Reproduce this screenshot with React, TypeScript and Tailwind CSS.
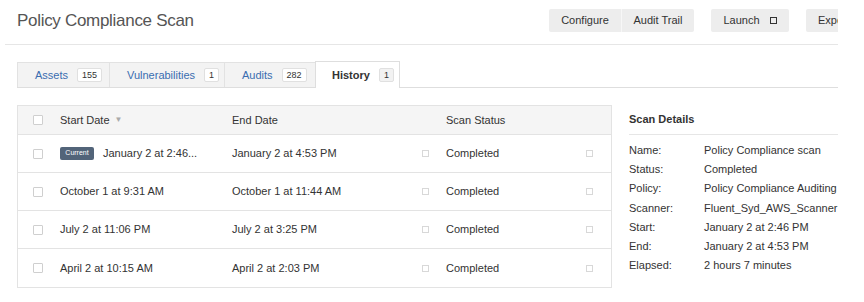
import React from 'react';

const tabs = [
  { label: 'Assets', count: '155', w: 'w-[92px]' },
  { label: 'Vulnerabilities', count: '1', w: 'w-[115px]' },
  { label: 'Audits', count: '282', w: 'w-[91px]' },
];

const rows = [
  { start: 'January 2 at 2:46...', end: 'January 2 at 4:53 PM', current: true },
  { start: 'October 1 at 9:31 AM', end: 'October 1 at 11:44 AM' },
  { start: 'July 2 at 11:06 PM', end: 'July 2 at 3:25 PM' },
  { start: 'April 2 at 10:15 AM', end: 'April 2 at 2:03 PM' },
];

const details = [
  ['Name:', 'Policy Compliance scan'],
  ['Status:', 'Completed'],
  ['Policy:', 'Policy Compliance Auditing'],
  ['Scanner:', 'Fluent_Syd_AWS_Scanner'],
  ['Start:', 'January 2 at 2:46 PM'],
  ['End:', 'January 2 at 4:53 PM'],
  ['Elapsed:', '2 hours 7 minutes'],
];

function Checkbox() {
  return <span className="block h-[10px] w-[10px] rounded-[1px] border border-[#cfcfcf] bg-white" />;
}

function Mini() {
  return <span className="block h-[7px] w-[7px] border border-[#d8d8d8] bg-white" />;
}

const grid = 'grid grid-cols-[42px_172px_190px_24px_140px_25px] items-center';

export default function App() {
  return (
    <div className="h-[302px] w-[864px] bg-white font-['Liberation_Sans',Arial,sans-serif] text-[#333]">
      <div className="w-[838px] overflow-hidden">
        {/* header */}
        <div className="ml-[5px] flex h-[45px] border-b border-[#e6e6e6] pl-[12px]">
          <div className="w-[532px] shrink-0 pt-[9px] text-[17px] leading-[24px] tracking-[-0.3px] text-[#555]">
            Policy Compliance Scan
          </div>
          <div className="flex shrink-0 pt-[9px] text-[11px]">
            <div className="flex h-[23px] rounded-[2px] bg-[#ededed]">
              <span className="flex w-[73px] items-center justify-center border-r border-[#f7f7f7]">Configure</span>
              <span className="flex w-[72px] items-center justify-center">Audit Trail</span>
            </div>
            <div className="ml-[17px] flex h-[23px] w-[78px] items-center justify-center gap-[10px] rounded-[2px] bg-[#ededed]">
              Launch
              <span className="block h-[7px] w-[7px] border-[1.5px] border-[#333]" />
            </div>
            <div className="ml-[17px] flex h-[23px] w-[70px] items-center rounded-[2px] bg-[#ededed] pl-[12px]">
              Export
            </div>
          </div>
        </div>

        {/* tabs */}
        <div className="ml-[17px] mt-[17px] flex h-[26px] items-end border-b border-[#dedede] text-[11px]">
          {tabs.map((t) => (
            <div
              key={t.label}
              className={`${t.w} flex h-[25px] items-center gap-[9px] border-l border-t border-[#e2e2e2] bg-[#f3f3f3] pl-[17px] text-[#3a6db0]`}
            >
              {t.label}
              <span className="rounded-[2px] border border-[#e0e0e0] bg-white px-[4px] text-[9px] leading-[12px] text-[#333]">
                {t.count}
              </span>
            </div>
          ))}
          <div className="-mb-px flex h-[27px] w-[85px] items-center gap-[9px] border border-b-0 border-[#dedede] bg-white pl-[16px] font-bold text-[#333]">
            History
            <span className="rounded-[2px] border border-[#e0e0e0] bg-[#f2f2f2] px-[4px] text-[9px] font-normal leading-[12px]">
              1
            </span>
          </div>
        </div>

        {/* body */}
        <div className="ml-[17px] mt-[17px] flex gap-[17px] text-[11px]">
          <div className="w-[595px] border border-[#e3e3e3]">
            <div className={`${grid} h-[29px] border-b border-[#e3e3e3] bg-[#f5f5f5]`}>
              <span className="pl-[15px]"><Checkbox /></span>
              <span className="flex items-center gap-[5px]">
                Start Date <span className="text-[8px] text-[#aaa]">▼</span>
              </span>
              <span>End Date</span>
              <span />
              <span>Scan Status</span>
              <span />
            </div>
            {rows.map((r, i) => (
              <div
                key={i}
                className={`${grid} h-[38px] ${i < rows.length - 1 ? 'border-b border-[#e3e3e3]' : ''}`}
              >
                <span className="pl-[15px]"><Checkbox /></span>
                <span className="flex items-center gap-[9px]">
                  {r.current && (
                    <span className="flex h-[13px] w-[34px] items-center justify-center rounded-[2px] bg-[#526479] text-[7px] text-white">
                      Current
                    </span>
                  )}
                  {r.start}
                </span>
                <span>{r.end}</span>
                <span><Mini /></span>
                <span>Completed</span>
                <span><Mini /></span>
              </div>
            ))}
          </div>

          <div className="w-[209px]">
            <div className="flex h-[30px] items-center border-b border-[#e6e6e6] font-bold">Scan Details</div>
            <div className="pt-[6px]">
              {details.map(([k, v]) => (
                <div key={k} className="flex leading-[19.2px]">
                  <span className="w-[75px]">{k}</span>
                  <span>{v}</span>
                </div>
              ))}
            </div>
          </div>
        </div>
      </div>
    </div>
  );
}
